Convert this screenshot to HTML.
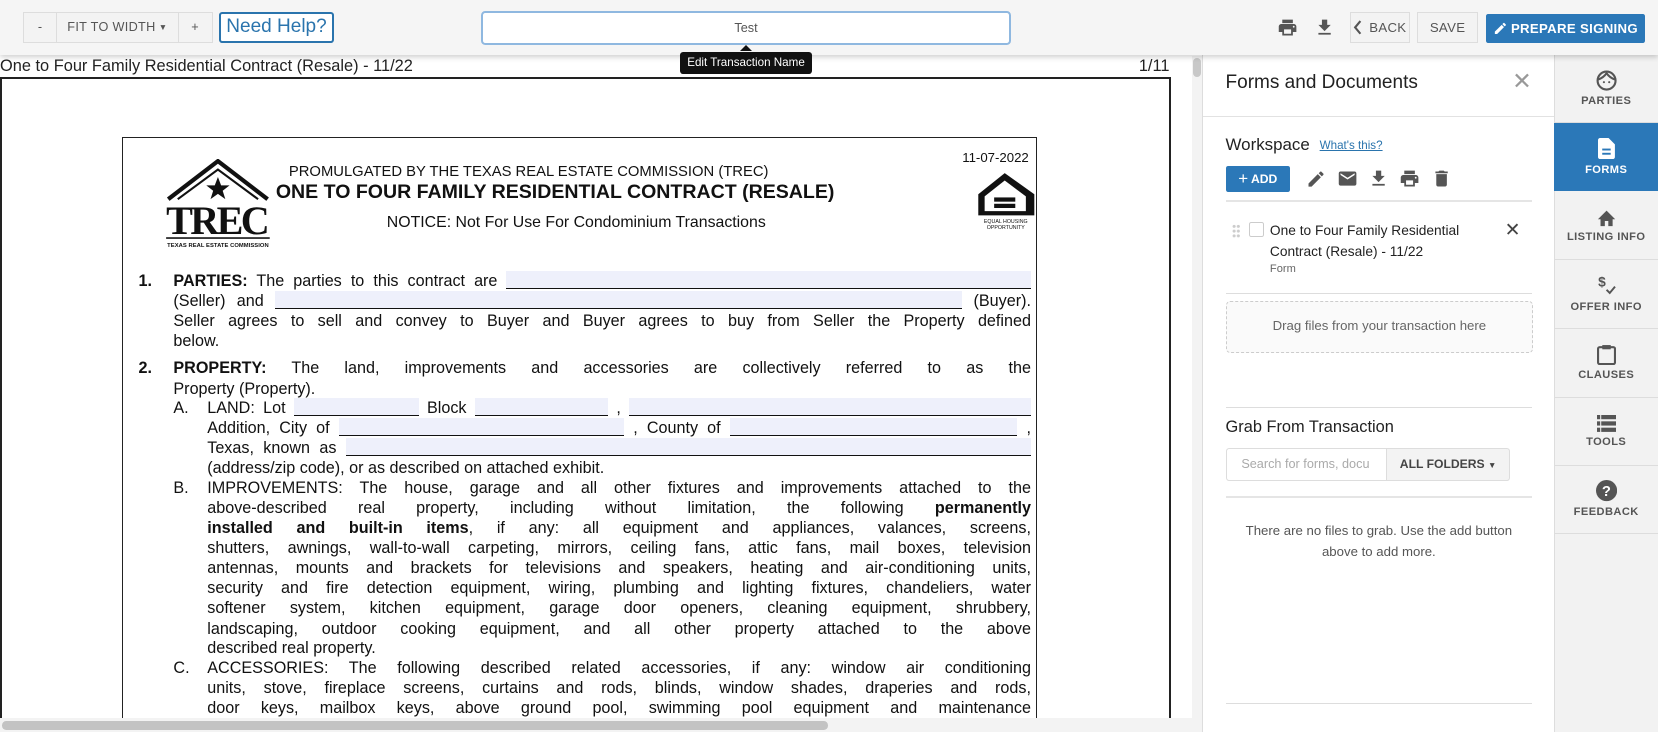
<!DOCTYPE html>
<html><head><meta charset="utf-8"><style>
*{box-sizing:border-box;margin:0;padding:0}
html,body{width:1658px;height:732px;overflow:hidden;background:#fff;font-family:"Liberation Sans",Arial,sans-serif}
#w{zoom:1.05740;width:1568px;height:693px;position:relative;overflow:hidden}
.a{position:absolute}
.top{left:0;top:0;width:1568px;height:52px;background:#f5f5f5;box-shadow:0 2px 5px rgba(0,0,0,.2);z-index:5}
.btn{position:absolute;top:11px;height:30px;border:1px solid #ddd;background:#f3f3f3;color:#555;font-size:12px;display:flex;align-items:center;justify-content:center;letter-spacing:.3px}
.ic{fill:#555}
.doc{font-size:15.3px;color:#111;line-height:19px}
.ln{position:absolute;left:164px;width:811px;text-align:justify;text-align-last:justify;white-space:nowrap}
.f{display:inline-block;background:#eef0fb;border-bottom:1.5px solid #111;height:17px;vertical-align:-3px}
.side{position:absolute;left:1470px;width:98px;height:65px;border-bottom:1px solid #ddd;display:flex;flex-direction:column;align-items:center;justify-content:center;font-size:10.5px;font-weight:bold;color:#555;letter-spacing:.4px}
.side svg{margin-bottom:4px}
.hr{position:absolute;left:1159px;width:290px;height:1px;background:#ddd}
</style></head><body><div id="w">
<div class="a top">
 <div class="btn" style="left:22px;width:32px">-</div>
 <div class="btn" style="left:53px;width:116px">FIT TO WIDTH <span style="font-size:8px;margin-left:3px">▼</span></div>
 <div class="btn" style="left:168px;width:33px">+</div>
 <div class="btn" style="left:207px;width:109px;border:2px solid #2a74ad;border-radius:3px;background:#fff;color:#2a74ad;font-size:18px;letter-spacing:0">Need Help?</div>
 <div class="a" style="left:455px;top:10px;width:501px;height:33px;border:2px solid #8fb8e0;border-radius:4px;background:#fff;font-size:12px;color:#555;text-align:center;line-height:29px">Test</div>
 <svg class="a" style="left:1208px;top:16px" width="20" height="20" viewBox="0 0 24 24"><path class="ic" d="M19 8H5c-1.7 0-3 1.3-3 3v6h4v4h12v-4h4v-6c0-1.7-1.3-3-3-3zm-3 11H8v-5h8v5zm3-7c-.6 0-1-.4-1-1s.4-1 1-1 1 .4 1 1-.4 1-1 1zm-1-9H6v4h12V3z"/></svg>
 <svg class="a" style="left:1243px;top:16px" width="20" height="20" viewBox="0 0 24 24"><path class="ic" d="M19 9h-4V3H9v6H5l7 7 7-7zM5 18v2h14v-2H5z"/></svg>
 <div class="btn" style="left:1277px;width:56px;font-size:12.5px;background:#f3f3f3"><svg width="9" height="14" viewBox="0 0 9 14" style="margin-right:6px"><path d="M7 1 L2 7 L7 13" fill="none" stroke="#555" stroke-width="2"/></svg>BACK</div>
 <div class="btn" style="left:1340px;width:58px;font-size:12.5px">SAVE</div>
 <div class="btn" style="left:1405px;top:13px;height:28px;width:151px;background:#2b78b8;border-color:#2b78b8;color:#fff;font-weight:bold;font-size:12.5px;border-radius:2px"><svg width="14" height="14" viewBox="0 0 24 24" style="margin-right:3px"><path fill="#fff" d="M3 17.3V21h3.7L17.8 9.9l-3.7-3.7L3 17.3zM20.7 7c.4-.4.4-1 0-1.4l-2.3-2.3c-.4-.4-1-.4-1.4 0l-1.8 1.8 3.7 3.7L20.7 7z"/></svg>PREPARE SIGNING</div>
</div>
<div class="a" style="left:643px;top:49px;width:125px;height:21px;background:#111;border-radius:3px;color:#fff;font-size:11px;text-align:center;line-height:21px;z-index:6">Edit Transaction Name</div>
<div class="a" style="left:700px;top:43px;width:0;height:0;border:6px solid transparent;border-bottom-color:#111;border-top:0;z-index:6"></div>

<div class="a" style="left:0;top:54px;font-size:15.5px;color:#222">One to Four Family Residential Contract (Resale) - 11/22</div>
<div class="a" style="left:1077px;top:54px;font-size:15.5px;color:#222">1/11</div>
<div class="a" style="left:1127px;top:53px;width:10px;height:640px;background:#f3f3f3"></div>
<div class="a" style="left:1128px;top:55px;width:8px;height:18px;background:#c8c8c8;border-radius:4px"></div>
<div class="a" style="left:0;top:73px;width:1107px;height:620px;border:2px solid #222;border-bottom:0"></div>
<div class="a" style="left:115px;top:130px;width:866px;height:560px;border:1.5px solid #222;border-bottom:0"></div>

<svg class="a" style="left:155px;top:150px" width="102" height="85" viewBox="0 0 102 85">
<path d="M4 38 L51 2 L98 38" fill="none" stroke="#111" stroke-width="4"/><path d="M13 38 L51 10 L89 38" fill="none" stroke="#111" stroke-width="2"/>
<path d="M51 17 l3 8 h8 l-6.5 5 2.5 8 -7-5 -7 5 2.5-8 -6.5-5 h8z" fill="#111"/>
<text x="51" y="71" text-anchor="middle" font-family="Liberation Serif" font-weight="bold" font-size="38" fill="#111" textLength="98">TREC</text>
<rect x="2" y="74" width="98" height="1.5" fill="#111"/>
<text x="51" y="83" text-anchor="middle" font-size="5.5" font-weight="bold" fill="#111" textLength="96">TEXAS REAL ESTATE COMMISSION</text>
</svg>
<div class="a doc" style="left:250px;width:500px;top:153px;text-align:center;font-size:14px">PROMULGATED BY THE TEXAS REAL ESTATE COMMISSION (TREC)</div>
<div class="a doc" style="left:200px;width:700px;top:172px;text-align:center;font-size:18.5px;font-weight:bold;padding-right:50px">ONE TO FOUR FAMILY RESIDENTIAL CONTRACT (RESALE)</div>
<div class="a doc" style="left:250px;width:600px;top:201px;text-align:center;font-size:15px;padding-right:10px">NOTICE: Not For Use For Condominium Transactions</div>
<div class="a doc" style="left:910px;top:140px;font-size:12.5px">11-07-2022</div>
<svg class="a" style="left:920px;top:162px" width="60" height="56" viewBox="0 0 60 56"><path d="M30 2 L58 22 V42 H5 V22 Z" fill="#111"/><path d="M30 9 L50 24 V38 H11 V24Z" fill="#fff"/><rect x="20" y="25" width="20" height="4" fill="#111"/><rect x="20" y="31" width="20" height="4" fill="#111"/><text x="31" y="49" font-size="5" text-anchor="middle" fill="#111">EQUAL HOUSING</text><text x="31" y="55" font-size="5" text-anchor="middle" fill="#111">OPPORTUNITY</text></svg>

<div class="doc">
<div class="a" style="left:131px;top:256px;font-weight:bold">1.</div>
<div class="ln" style="top:256px"><b>PARTIES:</b> The parties to this contract are <span class="f" style="width:496px"></span></div>
<div class="ln" style="top:275px">(Seller) and <span class="f" style="width:650px"></span> (Buyer).</div>
<div class="ln" style="top:294px">Seller agrees to sell and convey to Buyer and Buyer agrees to buy from Seller the Property defined</div>
<div class="a" style="left:164px;top:313px">below.</div>
<div class="a" style="left:131px;top:339px;font-weight:bold">2.</div>
<div class="ln" style="top:339px"><b>PROPERTY:</b> The land, improvements and accessories are collectively referred to as the</div>
<div class="a" style="left:164px;top:358px">Property (Property).</div>
<div class="a" style="left:164px;top:376px">A.</div>
<div class="ln" style="top:376px;left:196px;width:779px">LAND: Lot <span class="f" style="width:118px"></span> Block <span class="f" style="width:126px"></span> , <span class="f" style="width:380px"></span></div>
<div class="ln" style="top:395px;left:196px;width:779px">Addition, City of <span class="f" style="width:270px"></span> , County of <span class="f" style="width:272px"></span> ,</div>
<div class="ln" style="top:414px;left:196px;width:779px">Texas, known as <span class="f" style="width:648px"></span></div>
<div class="a" style="left:196px;top:433px">(address/zip code), or as described on attached exhibit.</div>
<div class="a" style="left:164px;top:452px">B.</div>
<div class="ln" style="top:452px;left:196px;width:779px">IMPROVEMENTS: The house, garage and all other fixtures and improvements attached to the</div>
<div class="ln" style="top:471px;left:196px;width:779px">above-described real property, including without limitation, the following <b>permanently</b></div>
<div class="ln" style="top:490px;left:196px;width:779px"><b>installed and built-in items</b>, if any: all equipment and appliances, valances, screens,</div>
<div class="ln" style="top:509px;left:196px;width:779px">shutters, awnings, wall-to-wall carpeting, mirrors, ceiling fans, attic fans, mail boxes, television</div>
<div class="ln" style="top:528px;left:196px;width:779px">antennas, mounts and brackets for televisions and speakers, heating and air-conditioning units,</div>
<div class="ln" style="top:547px;left:196px;width:779px">security and fire detection equipment, wiring, plumbing and lighting fixtures, chandeliers, water</div>
<div class="ln" style="top:566px;left:196px;width:779px">softener system, kitchen equipment, garage door openers, cleaning equipment, shrubbery,</div>
<div class="ln" style="top:585px;left:196px;width:779px">landscaping, outdoor cooking equipment, and all other property attached to the above</div>
<div class="a" style="left:196px;top:603px">described real property.</div>
<div class="a" style="left:164px;top:622px">C.</div>
<div class="ln" style="top:622px;left:196px;width:779px">ACCESSORIES: The following described related accessories, if any: window air conditioning</div>
<div class="ln" style="top:641px;left:196px;width:779px">units, stove, fireplace screens, curtains and rods, blinds, window shades, draperies and rods,</div>
<div class="ln" style="top:660px;left:196px;width:779px">door keys, mailbox keys, above ground pool, swimming pool equipment and maintenance</div>
</div>
<div class="a" style="left:0;top:679px;width:1127px;height:13px;background:#f3f3f3"></div>
<div class="a" style="left:2px;top:682px;width:781px;height:8px;background:#c3c3c3;border-radius:4px"></div>

<div class="a" style="left:1137px;top:52px;width:333px;height:641px;background:#fff;border-left:1px solid #ddd"></div>
<div class="a" style="left:1159px;top:68px;font-size:18px;color:#222">Forms and Documents</div>
<div class="a" style="left:1430px;top:64px;font-size:22px;color:#999;font-weight:300">✕</div>
<div class="a" style="left:1138px;top:110px;width:332px;height:1px;background:#e2e2e2"></div>
<div class="a" style="left:1159px;top:128px;font-size:16px;color:#222">Workspace</div>
<div class="a" style="left:1248px;top:131px;font-size:11px;color:#2a74ad;text-decoration:underline">What's this?</div>
<div class="a" style="left:1159px;top:157px;width:61px;height:25px;background:#2b78b8;border-radius:2px;color:#fff;font-size:11.5px;font-weight:bold;text-align:center;line-height:25px"><span style="font-size:16px;font-weight:normal;vertical-align:-1px">+</span> ADD</div>
<svg class="a" style="left:1235px;top:160px" width="19" height="19" viewBox="0 0 24 24"><path class="ic" d="M3 17.3V21h3.7L17.8 9.9l-3.7-3.7L3 17.3zM20.7 7c.4-.4.4-1 0-1.4l-2.3-2.3c-.4-.4-1-.4-1.4 0l-1.8 1.8 3.7 3.7L20.7 7z"/></svg>
<svg class="a" style="left:1264px;top:159px" width="20" height="20" viewBox="0 0 24 24"><path class="ic" d="M20 4H4c-1.1 0-2 .9-2 2v12c0 1.1.9 2 2 2h16c1.1 0 2-.9 2-2V6c0-1.1-.9-2-2-2zm0 4l-8 5-8-5V6l8 5 8-5v2z"/></svg>
<svg class="a" style="left:1294px;top:159px" width="20" height="20" viewBox="0 0 24 24"><path class="ic" d="M19 9h-4V3H9v6H5l7 7 7-7zM5 18v2h14v-2H5z"/></svg>
<svg class="a" style="left:1323px;top:159px" width="20" height="20" viewBox="0 0 24 24"><path class="ic" d="M19 8H5c-1.7 0-3 1.3-3 3v6h4v4h12v-4h4v-6c0-1.7-1.3-3-3-3zm-3 11H8v-5h8v5zm3-7c-.6 0-1-.4-1-1s.4-1 1-1 1 .4 1 1-.4 1-1 1zm-1-9H6v4h12V3z"/></svg>
<svg class="a" style="left:1353px;top:159px" width="20" height="20" viewBox="0 0 24 24"><path class="ic" d="M6 19c0 1.1.9 2 2 2h8c1.1 0 2-.9 2-2V7H6v12zM19 4h-3.5l-1-1h-5l-1 1H5v2h14V4z"/></svg>
<div class="hr" style="top:189px;height:2px;background:#e5e5e5"></div>
<div class="a" style="left:1165px;top:212px;width:8px;height:14px;background:radial-gradient(circle,#ccc 1.3px,transparent 1.6px) 0 0/4px 4.5px"></div>
<div class="a" style="left:1181px;top:210px;width:14px;height:14px;border:1px solid #ccc;border-radius:2px"></div>
<div class="a" style="left:1201px;top:208px;font-size:13px;color:#222;line-height:20px">One to Four Family Residential<br>Contract (Resale) - 11/22</div>
<div class="a" style="left:1201px;top:249px;font-size:10.5px;color:#666">Form</div>
<div class="a" style="left:1423px;top:207px;font-size:18px;color:#444">✕</div>
<div class="hr" style="top:277px"></div>
<div class="a" style="left:1159px;top:285px;width:291px;height:49px;border:1.5px dashed #ccc;border-radius:4px;background:#fafafa;font-size:12.5px;color:#666;text-align:center;line-height:46px">Drag files from your transaction here</div>
<div class="hr" style="top:385px"></div>
<div class="a" style="left:1159px;top:395px;font-size:15.5px;color:#222">Grab From Transaction</div>
<div class="a" style="left:1159px;top:424px;width:153px;height:31px;border:1px solid #ddd;border-radius:3px 0 0 3px;font-size:12px;color:#aaa;padding-left:14px;line-height:29px;overflow:hidden;white-space:nowrap">Search for forms, docu</div>
<div class="a" style="left:1311px;top:424px;width:117px;height:31px;border:1px solid #ddd;background:#f3f3f3;border-radius:0 3px 3px 0;font-size:11.5px;font-weight:bold;color:#444;text-align:center;line-height:29px">ALL FOLDERS <span style="font-size:8px">▼</span></div>
<div class="hr" style="top:469px;height:2px;background:#e5e5e5"></div>
<div class="a" style="left:1164px;top:492px;width:280px;text-align:center;font-size:12.5px;color:#555;line-height:20px">There are no files to grab. Use the add button above to add more.</div>
<div class="hr" style="top:665px"></div>

<div class="a" style="left:1470px;top:52px;width:98px;height:641px;background:#f2f2f2;border-left:1px solid #ddd"></div>
<div class="side" style="top:52px;height:64px"><svg width="20" height="20" viewBox="0 0 20 20"><circle cx="10" cy="10" r="8.5" fill="none" stroke="#555" stroke-width="2"/><path d="M2 9 C5 8 8 6 10 3 C12 6 15 8 18 9" fill="none" stroke="#555" stroke-width="2"/><circle cx="7.5" cy="11.5" r="1" fill="#555"/><circle cx="12.5" cy="11.5" r="1" fill="#555"/></svg>PARTIES</div>
<div class="side" style="top:116px;background:#2b78b8;color:#fff;border:0"><svg width="16" height="20" viewBox="0 0 16 20"><path d="M2 0h8l6 6v12c0 1.1-.9 2-2 2H2c-1.1 0-2-.9-2-2V2C0 .9.9 0 2 0z" fill="#fff"/><rect x="4" y="10" width="8" height="1.8" fill="#2b78b8"/><rect x="4" y="14" width="8" height="1.8" fill="#2b78b8"/></svg>FORMS</div>
<div class="side" style="top:181px"><svg width="20" height="18" viewBox="0 0 24 22"><path d="M10 21v-6h4v6h5v-8h3L12 3 2 13h3v8z" fill="#555"/></svg>LISTING INFO</div>
<div class="side" style="top:246px"><svg width="20" height="20" viewBox="0 0 20 20"><text x="2" y="11" font-size="13" font-weight="bold" fill="#555">$</text><path d="M10 14 l3 3 5-6" fill="none" stroke="#555" stroke-width="1.8"/></svg>OFFER INFO</div>
<div class="side" style="top:311px"><svg width="18" height="20" viewBox="0 0 18 20"><rect x="1" y="3" width="16" height="16" rx="1.5" fill="none" stroke="#555" stroke-width="2"/><rect x="5" y="1" width="8" height="4" fill="#555"/></svg>CLAUSES</div>
<div class="side" style="top:376px"><svg width="18" height="16" viewBox="0 0 18 16"><g fill="#555"><rect x="0" y="0" width="3" height="4"/><rect x="4" y="0" width="14" height="4"/><rect x="0" y="6" width="3" height="4"/><rect x="4" y="6" width="14" height="4"/><rect x="0" y="12" width="3" height="4"/><rect x="4" y="12" width="14" height="4"/></g></svg>TOOLS</div>
<div class="side" style="top:440px"><svg width="20" height="20" viewBox="0 0 20 20"><circle cx="10" cy="10" r="10" fill="#555"/><text x="10" y="15" text-anchor="middle" font-size="14" font-weight="bold" fill="#fff">?</text></svg>FEEDBACK</div>
</div></body></html>
